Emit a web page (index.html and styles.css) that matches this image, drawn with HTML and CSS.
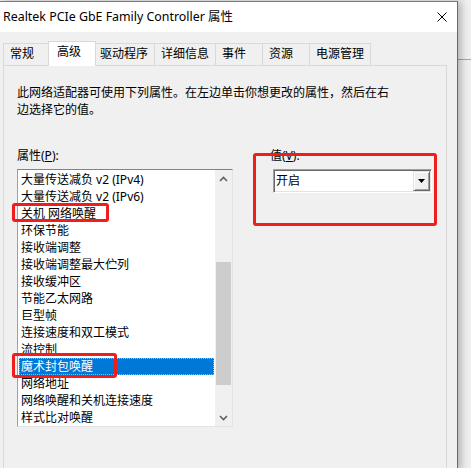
FILE: index.html
```html
<!DOCTYPE html>
<html>
<head>
<meta charset="utf-8">
<link rel="stylesheet" href="styles.css">
</head>
<body>
<div class="window">
  <div class="titlebar">
    <span class="title">Realtek PCIe GbE Family Controller 属性</span>
    <svg class="close" width="10" height="10" viewBox="0 0 10 10"><path d="M0.5 0.5 L9.5 9.5 M9.5 0.5 L0.5 9.5" stroke="#000" stroke-width="1" fill="none"/></svg>
  </div>
  <div class="tabstrip">
    <div class="tab">常规</div>
    <div class="tab active">高级</div>
    <div class="tab">驱动程序</div>
    <div class="tab">详细信息</div>
    <div class="tab">事件</div>
    <div class="tab">资源</div>
    <div class="tab">电源管理</div>
  </div>
  <div class="panel">
    <p class="desc">此网络适配器可使用下列属性。在左边单击你想更改的属性，然后在右<br>边选择它的值。</p>
    <div class="props">
      <div class="col-left">
        <div class="label">属性(<u>P</u>):</div>
        <div class="listbox">
          <ul class="items">
            <li>大量传送减负 v2 (IPv4)</li>
            <li>大量传送减负 v2 (IPv6)</li>
            <li>关机 网络唤醒</li>
            <li>环保节能</li>
            <li>接收端调整</li>
            <li>接收端调整最大伫列</li>
            <li>接收缓冲区</li>
            <li>节能乙太网路</li>
            <li>巨型帧</li>
            <li>连接速度和双工模式</li>
            <li>流控制</li>
            <li class="selected">魔术封包唤醒</li>
            <li>网络地址</li>
            <li>网络唤醒和关机连接速度</li>
            <li>样式比对唤醒</li>
          </ul>
          <div class="scrollbar">
            <div class="sb-btn"><svg width="9" height="6" viewBox="0 0 9 6"><path d="M1 5 L4.5 1.5 L8 5" stroke="#606060" stroke-width="1.6" fill="none"/></svg></div>
            <div class="sb-track"><div class="sb-thumb"></div></div>
            <div class="sb-btn"><svg width="9" height="6" viewBox="0 0 9 6"><path d="M1 1 L4.5 4.5 L8 1" stroke="#606060" stroke-width="1.6" fill="none"/></svg></div>
          </div>
        </div>
      </div>
      <div class="col-right">
        <div class="label">值(<u>V</u>):</div>
        <div class="select">
          <span class="select-text">开启</span>
          <span class="select-btn"><svg width="7" height="4" viewBox="0 0 7 4"><path d="M0 0 L7 0 L3.5 4 Z" fill="#000"/></svg></span>
        </div>
      </div>
    </div>
  </div>
  <div class="mark mark-a"></div>
  <div class="mark mark-b"></div>
  <div class="mark mark-c"></div>
</div>
</body>
</html>
```
FILE: styles.css
```css
* { box-sizing: border-box; }
html, body { margin: 0; padding: 0; }
body {
  width: 471px;
  height: 468px;
  overflow: hidden;
  background: linear-gradient(#f0f0f0 0, #f0f0f0 59px, #a8a8a8 59px, #a8a8a8 60px, #f0f0f0 60px);
  font-family: "Noto Sans", "Noto Sans CJK SC", sans-serif;
  font-size: 12px;
  color: #000;
}
.window {
  position: relative;
  width: 458px;
  height: 470px;
  margin-top: 1px;
  border-top: 1px solid #7a7a7a;
  border-right: 1px solid #6a6a6a;
  background: #f0f0f0;
  box-shadow: 3px 0 8px rgba(0, 0, 0, 0.28);
}
.titlebar {
  height: 30px;
  background: #fff;
  display: flex;
  align-items: center;
  justify-content: space-between;
  padding: 0 10px 0 3px;
}
.title { line-height: 16px; font-size: 12.4px; }
.close { display: block; }
.tabstrip {
  display: flex;
  align-items: flex-end;
  height: 33px;
  padding-left: 3px;
}
.tab {
  height: 22px;
  min-width: 48px;
  padding: 0 6px;
  line-height: 20px;
  border: 1px solid #d9d9d9;
  border-bottom: none;
  background: #f0f0f0;
  margin-left: -1px;
  white-space: nowrap;
}
.tab:first-child { margin-left: 0; }
.tab.active {
  position: relative;
  z-index: 1;
  height: 25px;
  margin: 0 -2px -1px -3px;
  padding: 0 8px;
  background: #fff;
}
.panel {
  margin: 0 10px 0 3px;
  height: 420px;
  border: 1px solid #d9d9d9;
  padding: 18px 13px 0 13px;
  background: #f0f0f0;
}
.desc {
  margin: 0;
  line-height: 17px;
}
.props {
  display: flex;
  gap: 37px;
  margin-top: 29px;
}
.label {
  line-height: 17px;
  margin-bottom: 5px;
}
.col-left { width: 216px; }
.col-right { width: 162px; }
.listbox {
  display: flex;
  height: 258px;
  background: #fff;
  border: 1px solid;
  border-color: #828282 #e3e3e3 #e3e3e3 #a0a0a0;
}
.items {
  flex: 1;
  list-style: none;
  margin: 0;
  padding: 1px 1px 0 1px;
}
.items li {
  height: 17px;
  line-height: 17px;
  padding-left: 2px;
  white-space: nowrap;
}
.items li.selected {
  background: #0078d7;
  color: #fff;
  outline: 1px dotted #f2a64a;
  outline-offset: -1px;
}
.scrollbar {
  width: 17px;
  display: flex;
  flex-direction: column;
  background: #f0f0f0;
}
.sb-btn {
  height: 17px;
  display: flex;
  align-items: center;
  justify-content: center;
}
.sb-track { flex: 1; padding: 0 1px; }
.sb-thumb {
  margin-top: 75px;
  height: 123px;
  background: #cdcdcd;
}
.select {
  display: flex;
  align-items: stretch;
  height: 24px;
  margin-left: 3px;
  background: #fff;
  border: 1px solid;
  border-color: #a0a0a0 #ffffff #ffffff #a0a0a0;
  box-shadow: inset 1px 1px 0 #696969, inset -1px -1px 0 #e3e3e3;
  padding: 1px;
}
.select-text {
  flex: 1;
  line-height: 20px;
  padding-left: 1px;
}
.select-btn {
  width: 17px;
  display: flex;
  align-items: center;
  justify-content: center;
  background: #f0f0f0;
  border: 1px solid;
  border-color: #e3e3e3 #696969 #696969 #e3e3e3;
  box-shadow: inset 1px 1px 0 #fff, inset -1px -1px 0 #a0a0a0;
}
.mark {
  position: absolute;
  border: 3px solid #f01d1d;
  border-radius: 3px;
}
.mark-a { left: 12px; top: 201px; width: 97px; height: 19px; }
.mark-b { left: 12px; top: 351px; width: 105px; height: 25px; }
.mark-c { left: 253px; top: 151px; width: 184px; height: 73px; }
```
